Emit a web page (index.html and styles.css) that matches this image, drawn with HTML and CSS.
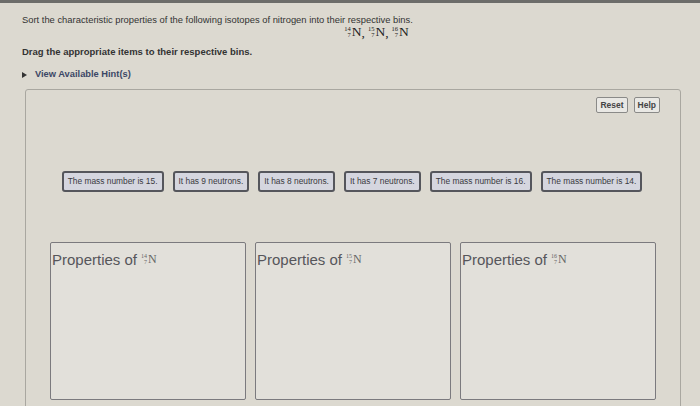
FILE: index.html
```html
<!DOCTYPE html>
<html>
<head>
<meta charset="utf-8">
<link rel="stylesheet" href="styles.css">
</head>
<body>
<div class="strip"></div>
<div class="header">
  <div class="question">
    <div class="q-text">Sort the characteristic properties of the following isotopes of nitrogen into their respective bins.</div>
    <div class="isotopes">
      <span class="iso"><span class="nums"><span>14</span><span>7</span></span>N</span><span class="sep">,</span><span class="iso"><span class="nums"><span>15</span><span>7</span></span>N</span><span class="sep">,</span><span class="iso"><span class="nums"><span>16</span><span>7</span></span>N</span>
    </div>
  </div>
  <div class="instr">Drag the appropriate items to their respective bins.</div>
  <div class="hint"><span class="tri"></span>View Available Hint(s)</div>
</div>
<div class="panel">
  <div class="tools">
    <span class="btn">Reset</span>
    <span class="btn">Help</span>
  </div>
  <div class="chips">
    <span class="chip">The mass number is 15.</span>
    <span class="chip">It has 9 neutrons.</span>
    <span class="chip">It has 8 neutrons.</span>
    <span class="chip">It has 7 neutrons.</span>
    <span class="chip">The mass number is 16.</span>
    <span class="chip">The mass number is 14.</span>
  </div>
  <div class="bins">
    <div class="bin"><div class="bin-title">Properties of <span class="iso small"><span class="nums"><span>14</span><span>7</span></span>N</span></div></div>
    <div class="bin"><div class="bin-title">Properties of <span class="iso small"><span class="nums"><span>15</span><span>7</span></span>N</span></div></div>
    <div class="bin"><div class="bin-title">Properties of <span class="iso small"><span class="nums"><span>16</span><span>7</span></span>N</span></div></div>
  </div>
</div>
</body>
</html>
```
FILE: styles.css
```css
html, body {
  margin: 0;
  padding: 0;
}
body {
  width: 700px;
  height: 406px;
  overflow: hidden;
  background: #dcd9d0;
  font-family: "Liberation Sans", Arial, sans-serif;
  color: #333;
}
.strip {
  height: 3px;
  background: #6d6d6a;
}
.header {
  padding: 11px 22px 0 22px;
  height: 86px;
  box-sizing: border-box;
}
.question {
  display: inline-block;
}
.q-text {
  font-size: 9.4px;
  line-height: 12px;
  color: #333;
}
.isotopes {
  height: 12px;
  display: flex;
  justify-content: flex-end;
  align-items: center;
  padding-right: 4px;
  font-family: "Liberation Serif", "Times New Roman", serif;
  font-size: 13.5px;
  line-height: 12px;
  color: #222;
}
.iso {
  display: inline-flex;
  align-items: center;
}
.nums {
  display: inline-flex;
  flex-direction: column;
  align-items: flex-end;
  font-size: 6.5px;
  line-height: 6px;
  margin-right: 1px;
}
.sep {
  align-self: flex-end;
  line-height: 10px;
  margin-right: 3px;
}
.instr {
  margin-top: 8px;
  font-size: 9.5px;
  line-height: 11px;
  font-weight: bold;
  color: #333;
}
.hint {
  margin-top: 12px;
  font-size: 9.3px;
  line-height: 11px;
  font-weight: bold;
  color: #3b4766;
  display: flex;
  align-items: center;
}
.tri {
  width: 0;
  height: 0;
  border-left: 5px solid #333;
  border-top: 3.5px solid transparent;
  border-bottom: 3.5px solid transparent;
  margin-right: 8px;
}
.panel {
  margin: 0 19px 0 25px;
  border: 1px solid #a9a7a0;
  border-radius: 3px;
  height: 330px;
  box-sizing: border-box;
  padding: 7px 20px 0 22px;
  display: flex;
  flex-direction: column;
}
.tools {
  display: flex;
  justify-content: flex-end;
  gap: 6px;
}
.btn {
  font-size: 8.5px;
  font-weight: bold;
  color: #444;
  background: #e9e8e4;
  border: 1px solid #8a8a88;
  border-radius: 2px;
  padding: 2px 3px;
  line-height: 10px;
}
.chips {
  margin-top: 58px;
  display: flex;
  gap: 9px;
  justify-content: center;
  padding-right: 4px;
}
.chip {
  font-size: 8.4px;
  line-height: 15px;
  color: #3a3a40;
  background: #d5d6df;
  border: 2px solid #55565c;
  border-radius: 3px;
  padding: 1px 4px;
  white-space: nowrap;
}
.bins {
  margin-top: 50px;
  display: flex;
  gap: 9px;
  justify-content: center;
  padding-right: 2px;
}
.bin {
  width: 196px;
  height: 158px;
  box-sizing: border-box;
  border: 1px solid #7b7a7e;
  border-radius: 2px;
  background: #e2e0da;
  padding: 8px 0 0 1px;
}
.bin-title {
  font-size: 15px;
  color: #56565a;
  line-height: 17px;
  display: flex;
  align-items: center;
}
.iso.small {
  font-family: "Liberation Serif", "Times New Roman", serif;
  font-size: 12px;
  color: #666;
  margin-left: 4px;
}
.iso.small .nums {
  font-size: 6px;
  line-height: 5.5px;
}
```
